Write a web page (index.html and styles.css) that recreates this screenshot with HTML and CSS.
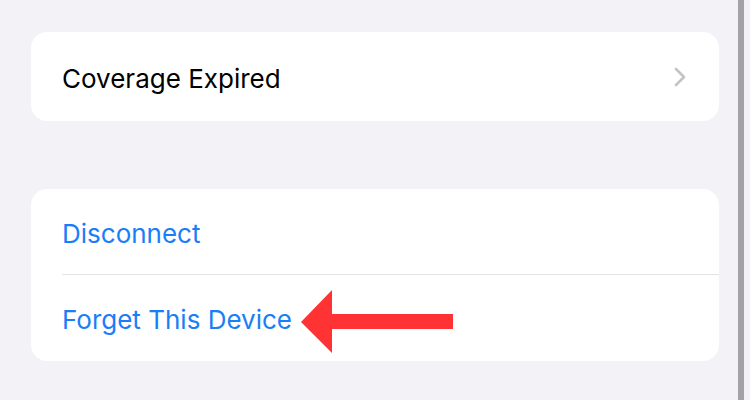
FILE: index.html
```html
<!DOCTYPE html>
<html lang="en">
<head>
<meta charset="utf-8">
<link rel="stylesheet" href="styles.css">
</head>
<body>
<div class="screen">
  <main class="content">
    <section class="group group-first">
      <div class="row">
        <span class="label">Coverage Expired</span>
        <svg class="chevron" width="14" height="20" viewBox="0 0 14 20"><path d="M3 2 L11 10 L3 18" fill="none" stroke="#c4c4c7" stroke-width="2.6" stroke-linecap="round" stroke-linejoin="round"/></svg>
      </div>
    </section>
    <section class="group group-second">
      <div class="row row-divided">
        <span class="label action">Disconnect</span>
      </div>
      <div class="row row-arrow">
        <span class="label action">Forget This Device</span>
        <svg class="arrow" width="153" height="64" viewBox="0 0 153 64"><polygon points="0,32 31,0 31,24 152,24 152,39 31,39 31,63" fill="#ff3333"/></svg>
      </div>
    </section>
  </main>
  <div class="edge-bar"></div>
  <div class="edge-strip"></div>
</div>
</body>
</html>
```
FILE: styles.css
```css
html, body {
  margin: 0;
  padding: 0;
}
body {
  background: #f2f2f7;
  font-family: "Inter", "Liberation Sans", sans-serif;
  width: 750px;
  height: 400px;
  overflow: hidden;
}
.screen {
  display: flex;
  height: 400px;
}
.content {
  width: 738px;
  padding: 32px 0 0 31px;
  box-sizing: border-box;
  display: flex;
  flex-direction: column;
}
.group {
  width: 688px;
  background: #ffffff;
  border-radius: 16px;
  overflow: visible;
}
.group-second {
  margin-top: 68px;
}
.row {
  height: 89px;
  display: flex;
  align-items: center;
  justify-content: space-between;
  padding: 4px 31px 0;
  box-sizing: border-box;
  position: relative;
}
.group-second .row {
  height: 86px;
}
.row-divided {
  border-bottom: 1px solid #e3e3e8;
  margin-left: 31px;
  padding-left: 0;
}
.label {
  font-size: 26px;
  color: #000000;
  letter-spacing: 0;
  line-height: 1;
}
.action {
  color: #1a7ef8;
}
.chevron {
  margin-right: 1px;
  margin-top: -4px;
}
.row-arrow {
  justify-content: flex-start;
}
.arrow {
  position: absolute;
  left: 270px;
  top: 15px;
}
.edge-bar {
  width: 6px;
  background: #a3a3a6;
}
.edge-strip {
  flex: 1;
  background: #f2f2f7;
}
```
